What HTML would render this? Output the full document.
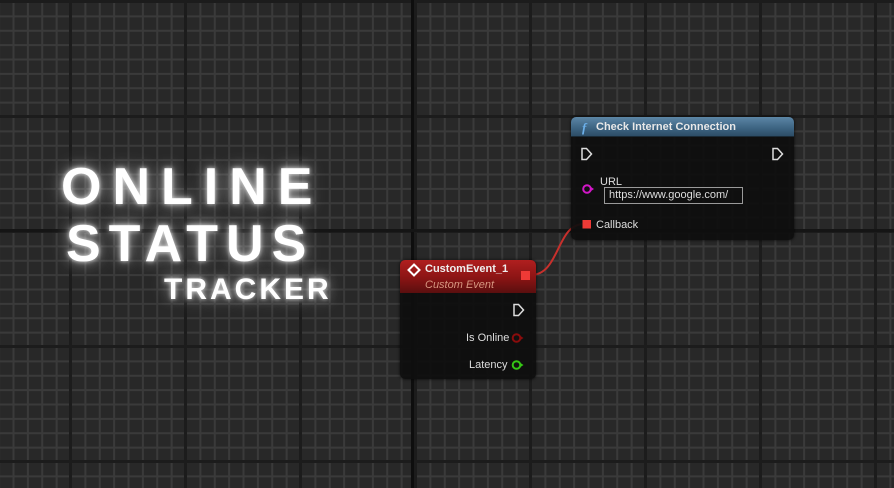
<!DOCTYPE html>
<html><head><meta charset="utf-8"><style>
*{margin:0;padding:0;box-sizing:border-box}
body{width:894px;height:488px;overflow:hidden;background:#282828;font-family:"Liberation Sans",sans-serif;position:relative}
svg.bg{position:absolute;left:0;top:0}
.t{position:absolute;color:#fff;font-weight:bold;white-space:nowrap;text-shadow:0 0 5px rgba(255,255,255,.8),0 0 12px rgba(255,255,255,.5),0 0 22px rgba(255,255,255,.3)}
.node{position:absolute;background:rgba(14,14,14,.93);border-radius:5px;box-shadow:0 0 3px rgba(0,0,0,.8);overflow:hidden}
.lbl{position:absolute;color:#ddd;font-size:11px;white-space:nowrap}
</style></head><body>
<svg class="bg" width="894" height="488">
<defs>
<pattern id="mn" x="70" y="1" width="14.375" height="14.375" patternUnits="userSpaceOnUse">
<rect width="14.375" height="14.375" fill="#282828"/>
<rect x="0" y="0" width="2" height="14.375" fill="#3a3a3a"/>
<rect x="0" y="0" width="14.375" height="2" fill="#3a3a3a"/>
</pattern>
<pattern id="mj" x="69" y="0" width="115" height="115" patternUnits="userSpaceOnUse">
<rect x="0" y="0" width="3" height="115" fill="#1c1c1c"/>
<rect x="0" y="0" width="115" height="3" fill="#1c1c1c"/>
</pattern>
</defs>
<rect width="894" height="488" fill="url(#mn)"/>
<rect width="894" height="488" fill="url(#mj)"/>
<rect x="411" y="0" width="3" height="488" fill="#0e0e0e"/>
<rect x="0" y="229" width="894" height="3" fill="#151515"/>
</svg>

<div class="t" style="left:61px;top:157px;font-size:52px;letter-spacing:11px">ONLINE</div>
<div class="t" style="left:66px;top:214px;font-size:52px;letter-spacing:8px">STATUS</div>
<div class="t" style="left:164px;top:273px;font-size:30px;letter-spacing:3px">TRACKER</div>

<svg style="position:absolute;left:0;top:0" width="894" height="488"><path d="M531 275 C560 275,556 224,584 224" stroke="#c8302c" stroke-width="2" fill="none"/></svg>

<div class="node" style="left:571px;top:117px;width:223px;height:123px">
<div style="height:20px;background:linear-gradient(#5c86a6,#3c6381 60%,#2d4d66);border-bottom:1px solid #1a2a36"></div>
</div>
<div class="lbl" style="left:582px;top:120px;color:#6cb0ea;font-style:italic;font-family:'Liberation Serif',serif;font-size:13px;font-weight:bold">f</div>
<div class="lbl" style="left:596px;top:121px;font-weight:bold;color:#e8e8e8">Check Internet Connection</div>
<svg style="position:absolute;left:0;top:0" width="894" height="488">
<path d="M582 148.5h4.5l5 5.5-5 5.5h-4.5z" fill="none" stroke="#ddd" stroke-width="1.5"/>
<path d="M773 148.5h4.5l5 5.5-5 5.5h-4.5z" fill="none" stroke="#ddd" stroke-width="1.5"/>
<circle cx="587" cy="189" r="3.8" fill="none" stroke="#d317c8" stroke-width="2"/>
<path d="M591 187l3 2-3 2z" fill="#d317c8"/>
<rect x="582.5" y="220" width="8.5" height="8.5" fill="#ef3a36"/>
</svg>
<div class="lbl" style="left:600px;top:176px">URL</div>
<div style="position:absolute;left:604px;top:187px;width:139px;height:17px;border:1px solid #9a9a9a;color:#ddd;font-size:11px;padding:1px 0 0 4px;white-space:nowrap">https://www.google.com/</div>
<div class="lbl" style="left:596px;top:219px">Callback</div>

<div class="node" style="left:400px;top:260px;width:136px;height:119px">
<div style="height:33px;background:linear-gradient(#b01f1f,#8a1414 55%,#5a0f0f);"></div>
</div>
<svg style="position:absolute;left:0;top:0" width="894" height="488">
<path d="M414 264.5l5.5 5.5-5.5 5.5-5.5-5.5z" fill="none" stroke="#fff" stroke-width="2"/>
<rect x="521" y="271" width="9" height="9" fill="#ef3a36"/>
<path d="M514 304.5h4.5l5 5.5-5 5.5h-4.5z" fill="none" stroke="#ddd" stroke-width="1.5"/>
<circle cx="516.5" cy="338" r="3.8" fill="none" stroke="#8a0c0c" stroke-width="2"/>
<path d="M520.5 336l3 2-3 2z" fill="#8a0c0c"/>
<circle cx="516.5" cy="365" r="3.8" fill="none" stroke="#35c615" stroke-width="2"/>
<path d="M520.5 363l3 2-3 2z" fill="#35c615"/>
</svg>
<div class="lbl" style="left:425px;top:263px;font-weight:bold;color:#eee">CustomEvent_1</div>
<div class="lbl" style="left:425px;top:279px;font-style:italic;color:#d6957f">Custom Event</div>
<div class="lbl" style="left:466px;top:332px">Is Online</div>
<div class="lbl" style="left:469px;top:359px">Latency</div>
</body></html>
